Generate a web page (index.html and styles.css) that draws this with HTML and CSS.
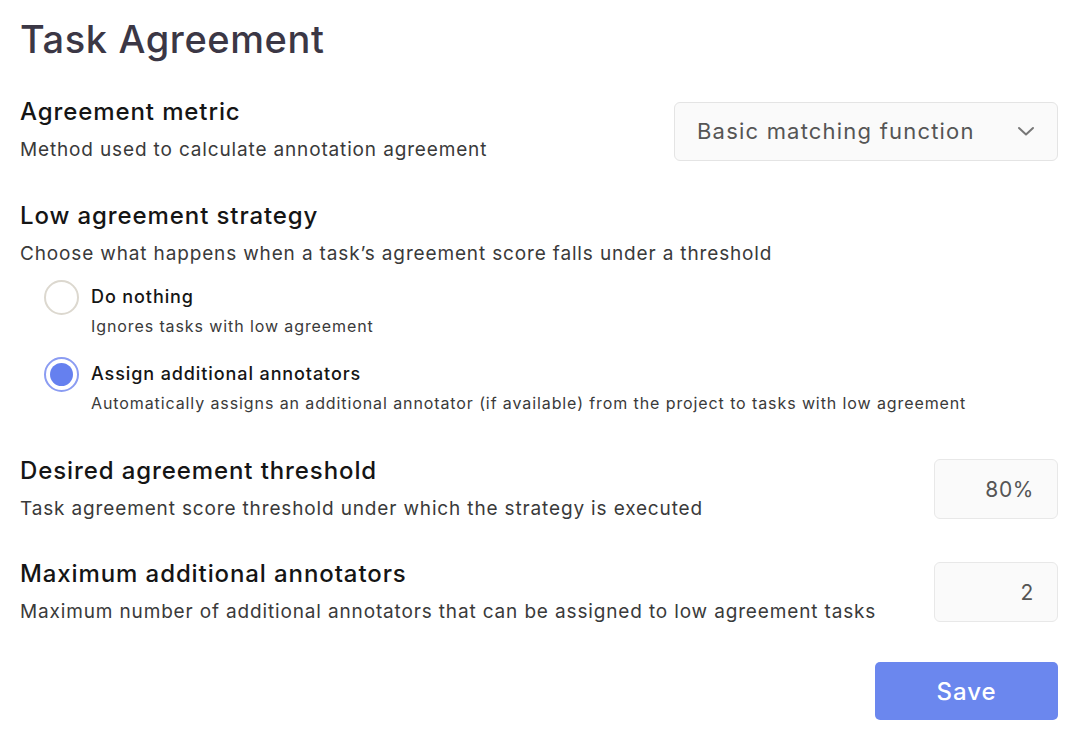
FILE: index.html
```html
<!DOCTYPE html>
<html lang="en">
<head>
<meta charset="utf-8">
<title>Task Agreement</title>
<link rel="stylesheet" href="styles.css">
</head>
<body>
<main class="page">
  <h1 class="title">Task Agreement</h1>

  <section class="row row-metric">
    <div class="text">
      <h2 class="heading">Agreement metric</h2>
      <p class="desc">Method used to calculate annotation agreement</p>
    </div>
    <div class="select">
      <span class="select-value">Basic matching function</span>
      <svg class="chevron" width="18" height="12" viewBox="0 0 18 12"><path d="M2 3 L9 9.5 L16 3" fill="none" stroke="#777" stroke-width="2" stroke-linecap="round" stroke-linejoin="round"/></svg>
    </div>
  </section>

  <section class="strategy">
    <h2 class="heading">Low agreement strategy</h2>
    <p class="desc">Choose what happens when a task’s agreement score falls under a threshold</p>
    <div class="options">
      <div class="option">
        <span class="radio"></span>
        <div class="option-text">
          <div class="option-title">Do nothing</div>
          <div class="option-desc">Ignores tasks with low agreement</div>
        </div>
      </div>
      <div class="option">
        <span class="radio radio-checked"><span class="dot"></span></span>
        <div class="option-text">
          <div class="option-title">Assign additional annotators</div>
          <div class="option-desc">Automatically assigns an additional annotator (if available) from the project to tasks with low agreement</div>
        </div>
      </div>
    </div>
  </section>

  <section class="row row-threshold">
    <div class="text">
      <h2 class="heading">Desired agreement threshold</h2>
      <p class="desc">Task agreement score threshold under which the strategy is executed</p>
    </div>
    <div class="input">80%</div>
  </section>

  <section class="row row-max">
    <div class="text">
      <h2 class="heading">Maximum additional annotators</h2>
      <p class="desc">Maximum number of additional annotators that can be assigned to low agreement tasks</p>
    </div>
    <div class="input">2</div>
  </section>

  <div class="actions">
    <button class="save" type="button">Save</button>
  </div>
</main>
</body>
</html>
```

FILE: styles.css
```css
* { box-sizing: border-box; }
html, body { margin: 0; padding: 0; background: #ffffff; }
body {
  font-family: "Inter", "Noto Sans", sans-serif;
  color: #222;
}
.page {
  width: 1080px;
  padding: 14px 22px 0 20px;
}
.title {
  margin: 0;
  font-size: 38px;
  font-weight: 500;
  color: #3b3745;
  line-height: 50px;
  letter-spacing: 0.6px;
}
.heading {
  margin: 0;
  font-size: 24px;
  font-weight: 500;
  color: #151515;
  line-height: 30px;
  letter-spacing: 0.9px;
}
.desc {
  margin: 10px 0 0;
  font-size: 19px;
  font-weight: 400;
  color: #3a3a3a;
  line-height: 26px;
  letter-spacing: 0.85px;
}
.row {
  display: flex;
  justify-content: space-between;
  align-items: center;
}
.row-metric { margin-top: 33px; }
.select {
  width: 384px;
  height: 59px;
  margin-top: 2px;
  background: #fafafa;
  border: 1px solid #e4e4e4;
  border-radius: 6px;
  display: flex;
  align-items: center;
  justify-content: space-between;
  padding: 0 22px 0 22px;
}
.select-value {
  font-size: 22px;
  color: #555;
  letter-spacing: 1.2px;
}
.strategy { margin-top: 38px; }
.options {
  margin-top: 18px;
  padding-left: 24px;
  display: flex;
  flex-direction: column;
  gap: 25px;
}
.option {
  display: flex;
  align-items: flex-start;
  gap: 12px;
}
.radio {
  width: 35px;
  height: 35px;
  border-radius: 50%;
  border: 2px solid #dcd8cf;
  background: #fff;
  flex: none;
  margin-top: -5px;
  display: flex;
  align-items: center;
  justify-content: center;
}
.radio-checked { border-color: #8b9cf2; }
.dot {
  width: 23px;
  height: 23px;
  border-radius: 50%;
  background: #6580ef;
}
.option-title {
  font-size: 18px;
  font-weight: 500;
  color: #151515;
  line-height: 24px;
  letter-spacing: 0.9px;
}
.option-desc {
  margin-top: 6px;
  font-size: 16px;
  color: #3a3a3a;
  line-height: 22px;
  letter-spacing: 0.9px;
}
.row-threshold { margin-top: 42px; }
.row-max { margin-top: 37px; }
.input {
  width: 124px;
  height: 60px;
  background: #fafafa;
  border: 1px solid #e8e8e8;
  border-radius: 6px;
  display: flex;
  align-items: center;
  justify-content: flex-end;
  padding-right: 23px;
  font-size: 21px;
  color: #555;
  letter-spacing: 0.6px;
}
.actions {
  display: flex;
  justify-content: flex-end;
  margin-top: 37px;
}
.save {
  width: 183px;
  height: 58px;
  background: #6b87ee;
  border: none;
  border-radius: 5px;
  color: #fff;
  font-family: inherit;
  font-size: 24px;
  font-weight: 500;
  letter-spacing: 1px;
}
```
